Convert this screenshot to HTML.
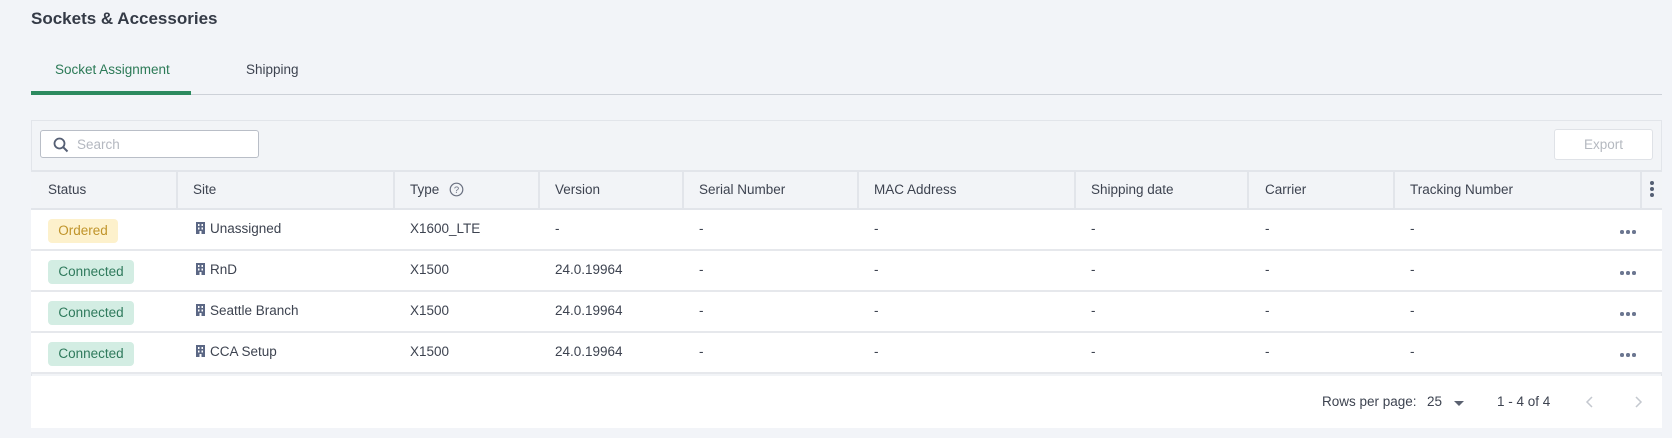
<!DOCTYPE html>
<html><head><meta charset="utf-8"><style>
*{box-sizing:border-box;margin:0;padding:0}
body{width:1672px;height:438px;background:#f2f4f8;font-family:"Liberation Sans",sans-serif;color:#3d4350;position:relative;overflow:hidden;font-size:13.5px}
.a{position:absolute;white-space:nowrap}
.title{left:31px;top:9px;font-size:17px;font-weight:bold;color:#343a46}
.tabline{left:31px;top:94px;width:1631px;height:1px;background:#cdd1d8}
.tabact{left:31px;top:91px;width:160px;height:4px;background:#2c8a5f}
.panel{left:31px;top:120px;width:1631px;height:308px;background:#f2f4f7;border:1px solid #e2e5ea}
.search{left:40px;top:130px;width:219px;height:28px;background:#fff;border:1px solid #b9bec7;border-radius:3px}
.export{left:1554px;top:129px;width:99px;height:31px;background:#fff;border:1px solid #dfe2e7;border-radius:3px;color:#b5b9c0;text-align:center;line-height:29px}
.hdr{left:31px;top:170px;width:1631px;height:40px;background:#f2f4f7;border-top:2px solid #e2e5ea;border-bottom:2px solid #e2e5ea}
.vl{position:absolute;top:170px;height:40px;width:2px;background:#e2e5ea}
.row{left:31px;width:1631px;height:41px;background:#fff;border-bottom:2px solid #e6e8ec}
.footer{left:31px;top:376px;width:1631px;height:52px;background:#fff}
.badge{position:absolute;height:24px;border-radius:4px;line-height:24px;text-align:center;font-size:13.5px}
.ord{background:#fdf1cc;color:#c0942a;width:70px}
.con{background:#d3ede3;color:#2f7a5c;width:86px}
.dots{position:absolute;left:1620px;display:flex;gap:2.5px;height:4px}
.dots i{display:block;width:3.5px;height:3.5px;border-radius:50%;background:#6b7690}
.ic{display:inline-block;vertical-align:-1px;margin-right:5px}
</style></head><body>
<div class="a title">Sockets &amp; Accessories</div>
<div class="a" style="left:55px;top:62px;color:#2c7a57">Socket Assignment</div>
<div class="a" style="left:246px;top:62px;color:#3d4350">Shipping</div>
<div class="a tabline"></div><div class="a tabact"></div>
<div class="a panel"></div>
<div class="a search"><svg width="16" height="16" viewBox="0 0 16 16" style="position:absolute;left:12px;top:6px"><circle cx="6.5" cy="6.5" r="5" fill="none" stroke="#555f74" stroke-width="1.8"/><path d="M10.2 10.2 L14.5 14.5" stroke="#555f74" stroke-width="2"/></svg><span class="a" style="left:36px;top:6px;color:#b4b8c0">Search</span></div>
<div class="a export">Export</div>
<div class="a hdr"></div>
<div class="vl" style="left:176px"></div><div class="vl" style="left:393px"></div><div class="vl" style="left:538px"></div><div class="vl" style="left:682px"></div><div class="vl" style="left:857px"></div><div class="vl" style="left:1074px"></div><div class="vl" style="left:1247px"></div><div class="vl" style="left:1393px"></div><div class="vl" style="left:1640px"></div>
<div class="a" style="left:48px;top:182px">Status</div>
<div class="a" style="left:193px;top:182px">Site</div>
<div class="a" style="left:410px;top:182px">Type <svg width="15" height="15" viewBox="0 0 15 15" style="vertical-align:-3px;margin-left:6px"><circle cx="7.5" cy="7.5" r="6.3" fill="none" stroke="#6a7080" stroke-width="1.2"/><text x="7.5" y="11" font-size="9.5" text-anchor="middle" fill="#6a7080" font-family="Liberation Sans">?</text></svg></div>
<div class="a" style="left:555px;top:182px">Version</div>
<div class="a" style="left:699px;top:182px">Serial Number</div>
<div class="a" style="left:874px;top:182px">MAC Address</div>
<div class="a" style="left:1091px;top:182px">Shipping date</div>
<div class="a" style="left:1265px;top:182px">Carrier</div>
<div class="a" style="left:1410px;top:182px">Tracking Number</div>
<div class="a" style="left:1650px;top:181px;width:4px"><div style="width:4px;height:4px;border-radius:50%;background:#555f74;margin-bottom:2px"></div><div style="width:4px;height:4px;border-radius:50%;background:#555f74;margin-bottom:2px"></div><div style="width:4px;height:4px;border-radius:50%;background:#555f74"></div></div>

<div class="a row" style="top:210px"><div class="badge ord" style="left:17px;top:9px">Ordered</div></div>
<div class="a row" style="top:251px"><div class="badge con" style="left:17px;top:9px">Connected</div></div>
<div class="a row" style="top:292px"><div class="badge con" style="left:17px;top:9px">Connected</div></div>
<div class="a row" style="top:333px"><div class="badge con" style="left:17px;top:9px">Connected</div></div>

<div class="a footer"></div>
<div class="a" style="left:1322px;top:394px">Rows per page:</div>
<div class="a" style="left:1427px;top:394px">25</div>
<div class="a" style="left:1454px;top:401px;width:0;height:0;border-left:5px solid transparent;border-right:5px solid transparent;border-top:5px solid #5a6170"></div>
<div class="a" style="left:1497px;top:394px">1 - 4 of 4</div>
<svg class="a" style="left:1585px;top:395px" width="10" height="14"><path d="M7 2 L2 7 L7 12" fill="none" stroke="#c4c8cf" stroke-width="1.5"/></svg>
<svg class="a" style="left:1633px;top:395px" width="10" height="14"><path d="M3 2 L8 7 L3 12" fill="none" stroke="#c4c8cf" stroke-width="1.5"/></svg>

<div class="a" style="left:196px;top:221px"><svg class="ic" width="9" height="12" viewBox="0 0 9 12"><path d="M0 0H9V12H5.5V9H3.5V12H0Z M2 2V4H3.5V2Z M5.5 2V4H7V2Z M2 5.5V7.5H3.5V5.5Z M5.5 5.5V7.5H7V5.5Z" fill="#5b6784" fill-rule="evenodd"/></svg>Unassigned</div>
<div class="a" style="left:410px;top:221px">X1600_LTE</div>
<div class="a" style="left:555px;top:221px">-</div><div class="a" style="left:699px;top:221px">-</div><div class="a" style="left:874px;top:221px">-</div><div class="a" style="left:1091px;top:221px">-</div><div class="a" style="left:1265px;top:221px">-</div><div class="a" style="left:1410px;top:221px">-</div>
<div class="dots" style="top:230px"><i></i><i></i><i></i></div>

<div class="a" style="left:196px;top:262px"><svg class="ic" width="9" height="12" viewBox="0 0 9 12"><path d="M0 0H9V12H5.5V9H3.5V12H0Z M2 2V4H3.5V2Z M5.5 2V4H7V2Z M2 5.5V7.5H3.5V5.5Z M5.5 5.5V7.5H7V5.5Z" fill="#5b6784" fill-rule="evenodd"/></svg>RnD</div>
<div class="a" style="left:410px;top:262px">X1500</div>
<div class="a" style="left:555px;top:262px">24.0.19964</div><div class="a" style="left:699px;top:262px">-</div><div class="a" style="left:874px;top:262px">-</div><div class="a" style="left:1091px;top:262px">-</div><div class="a" style="left:1265px;top:262px">-</div><div class="a" style="left:1410px;top:262px">-</div>
<div class="dots" style="top:271px"><i></i><i></i><i></i></div>

<div class="a" style="left:196px;top:303px"><svg class="ic" width="9" height="12" viewBox="0 0 9 12"><path d="M0 0H9V12H5.5V9H3.5V12H0Z M2 2V4H3.5V2Z M5.5 2V4H7V2Z M2 5.5V7.5H3.5V5.5Z M5.5 5.5V7.5H7V5.5Z" fill="#5b6784" fill-rule="evenodd"/></svg>Seattle Branch</div>
<div class="a" style="left:410px;top:303px">X1500</div>
<div class="a" style="left:555px;top:303px">24.0.19964</div><div class="a" style="left:699px;top:303px">-</div><div class="a" style="left:874px;top:303px">-</div><div class="a" style="left:1091px;top:303px">-</div><div class="a" style="left:1265px;top:303px">-</div><div class="a" style="left:1410px;top:303px">-</div>
<div class="dots" style="top:312px"><i></i><i></i><i></i></div>

<div class="a" style="left:196px;top:344px"><svg class="ic" width="9" height="12" viewBox="0 0 9 12"><path d="M0 0H9V12H5.5V9H3.5V12H0Z M2 2V4H3.5V2Z M5.5 2V4H7V2Z M2 5.5V7.5H3.5V5.5Z M5.5 5.5V7.5H7V5.5Z" fill="#5b6784" fill-rule="evenodd"/></svg>CCA Setup</div>
<div class="a" style="left:410px;top:344px">X1500</div>
<div class="a" style="left:555px;top:344px">24.0.19964</div><div class="a" style="left:699px;top:344px">-</div><div class="a" style="left:874px;top:344px">-</div><div class="a" style="left:1091px;top:344px">-</div><div class="a" style="left:1265px;top:344px">-</div><div class="a" style="left:1410px;top:344px">-</div>
<div class="dots" style="top:353px"><i></i><i></i><i></i></div>
</body></html>
